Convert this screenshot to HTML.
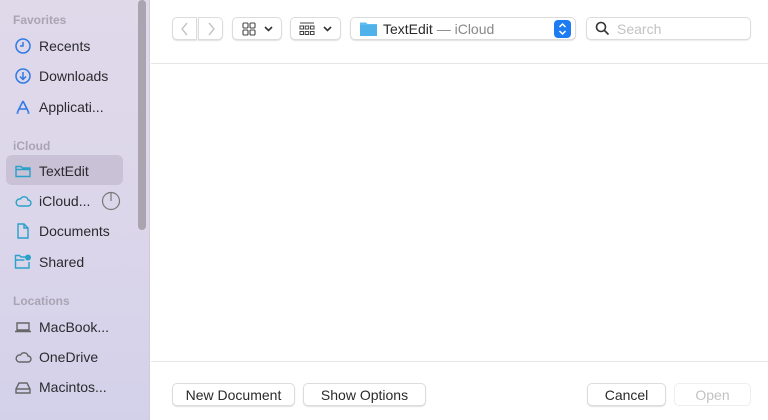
<!DOCTYPE html>
<html><head><style>
*{margin:0;padding:0;box-sizing:border-box}
body{width:768px;height:420px;overflow:hidden;font-family:"Liberation Sans",sans-serif;background:#fff;position:relative}
#side{position:absolute;left:0;top:0;width:150px;height:420px;background:linear-gradient(180deg,#e0d9ea 0%,#dcd6ea 50%,#d3d1ea 100%);border-right:1px solid #cfcbd8}
.h{position:absolute;left:13px;font-size:12px;font-weight:bold;color:#a9a4b4}
.it{position:absolute;left:14px;height:20px;display:flex;align-items:center;font-size:14px;color:#2a2a2e}
.it svg{width:18px;height:18px;margin-right:7px;flex:none}
#sel{position:absolute;left:6px;top:155px;width:117px;height:30px;background:#c9c1d6;border-radius:6px}
#sb{position:absolute;left:138px;top:0;width:8px;height:230px;background:#a9a4b0;border-radius:4px}
.btn{position:absolute;background:#fff;border:1px solid #dcdcdc;border-radius:5px;box-shadow:0 1px 1px rgba(0,0,0,.12);display:flex;align-items:center;justify-content:center;font-size:14px;color:#2a2a2a}
.line{position:absolute;left:151px;right:0;height:1px;background:#e6e6e6}
</style></head><body>
<div id="side">
<div id="sb"></div>
<div class="h" style="top:13px">Favorites</div>
<div class="it" style="top:36px"><svg viewBox="0 0 18 18" fill="none" stroke="#2f7ae5" stroke-width="1.5"><circle cx="9" cy="9" r="7"/><path d="M9 5v4H6"/></svg>Recents</div>
<div class="it" style="top:66px"><svg viewBox="0 0 18 18" fill="none" stroke="#2f7ae5" stroke-width="1.5"><circle cx="9" cy="9" r="7"/><path d="M9 5v7M6 9.5l3 3 3-3"/></svg>Downloads</div>
<div class="it" style="top:97px"><svg viewBox="0 0 18 18" fill="none" stroke="#2f7ae5" stroke-width="1.6"><path d="M9 3L3.5 14M9 3l5.5 11M5 11h8M2.5 15h2M13.5 15h2"/></svg>Applicati...</div>
<div class="h" style="top:139px">iCloud</div>
<div id="sel"></div>
<div class="it" style="top:161px"><svg viewBox="0 0 18 18" fill="none" stroke="#2aa1c9" stroke-width="1.4"><path d="M2 4.5h5l1.5 1.5H16v8.5H2z M2 7.5h14"/></svg>TextEdit</div>
<div class="it" style="top:191px"><svg viewBox="0 0 18 18" fill="none" stroke="#2aa1c9" stroke-width="1.4"><path d="M5 14h9a3 3 0 0 0 0-6 4 4 0 0 0-7.5-1A3.5 3.5 0 0 0 5 14z"/></svg>iCloud...<svg style="margin-left:11px;width:20px;height:20px" viewBox="0 0 20 20" fill="none" stroke="#777" stroke-width="1.2"><circle cx="10" cy="10" r="8.5"/><path d="M10 1.5V10"/></svg></div>
<div class="it" style="top:221px"><svg viewBox="0 0 18 18" fill="none" stroke="#2aa1c9" stroke-width="1.4"><path d="M4 2h6l4 4v10H4z M10 2v4h4"/></svg>Documents</div>
<div class="it" style="top:252px"><svg viewBox="0 0 18 18" fill="none" stroke="#2aa1c9" stroke-width="1.4"><path d="M12 4H7L5.5 2.5H1.5V15H15V9 M1.5 7h9"/><circle cx="14" cy="4.5" r="3" fill="#2aa1c9" stroke="none"/></svg>Shared</div>
<div class="h" style="top:294px">Locations</div>
<div class="it" style="top:317px"><svg viewBox="0 0 18 18" fill="none" stroke="#666" stroke-width="1.4"><path d="M3 5h12v7H3z M1 13.5h16"/></svg>MacBook...</div>
<div class="it" style="top:347px"><svg viewBox="0 0 18 18" fill="none" stroke="#666" stroke-width="1.4"><path d="M5 14h9a3 3 0 0 0 0-6 4 4 0 0 0-7.5-1A3.5 3.5 0 0 0 5 14z"/></svg>OneDrive</div>
<div class="it" style="top:377px"><svg viewBox="0 0 18 18" fill="none" stroke="#666" stroke-width="1.4"><path d="M2 11l3-6h8l3 6v4H2z M2 11h14"/></svg>Macintos...</div>
</div>
<div class="btn" style="left:172px;top:17px;width:25px;height:23px;border-radius:5px 0 0 5px"><svg width="10" height="14" viewBox="0 0 10 14" fill="none" stroke="#c4c4c4" stroke-width="1.4"><path d="M7 1L2 7l5 6"/></svg></div>
<div class="btn" style="left:198px;top:17px;width:25px;height:23px;border-radius:0 5px 5px 0"><svg width="10" height="14" viewBox="0 0 10 14" fill="none" stroke="#c4c4c4" stroke-width="1.4"><path d="M3 1l5 6-5 6"/></svg></div>
<div class="btn" style="left:232px;top:17px;width:50px;height:23px"><svg width="14" height="14" viewBox="0 0 14 14" fill="none" stroke="#444" stroke-width="1.1"><rect x="1" y="1" width="5" height="5" rx="1"/><rect x="8" y="1" width="5" height="5" rx="1"/><rect x="1" y="8" width="5" height="5" rx="1"/><rect x="8" y="8" width="5" height="5" rx="1"/></svg><svg style="margin-left:8px" width="9" height="6" viewBox="0 0 9 6" fill="none" stroke="#333" stroke-width="1.6"><path d="M1 1l3.5 3.5L8 1"/></svg></div>
<div class="btn" style="left:290px;top:17px;width:51px;height:23px"><svg width="16" height="14" viewBox="0 0 16 14" fill="none" stroke="#444" stroke-width="1"><path d="M1 1h14"/><rect x="1" y="4" width="3.5" height="3"/><rect x="6.2" y="4" width="3.5" height="3"/><rect x="11.5" y="4" width="3.5" height="3"/><rect x="1" y="9.5" width="3.5" height="3"/><rect x="6.2" y="9.5" width="3.5" height="3"/><rect x="11.5" y="9.5" width="3.5" height="3"/></svg><svg style="margin-left:8px" width="9" height="6" viewBox="0 0 9 6" fill="none" stroke="#333" stroke-width="1.6"><path d="M1 1l3.5 3.5L8 1"/></svg></div>
<div class="btn" style="left:350px;top:17px;width:226px;height:23px;justify-content:flex-start;padding-left:9px"><svg width="17" height="15" viewBox="0 0 17 15"><path d="M0 1.5h6l1.5 1.5H17V15H0z" fill="#5cbdf0"/><path d="M0 4h17v11H0z" fill="#4fb2ea"/></svg><span style="margin-left:6px;font-size:14px;color:#2a2a2a">TextEdit <span style="color:#888">— iCloud</span></span><div style="position:absolute;right:4px;top:2px;width:17px;height:18px;background:#1d7cf2;border-radius:4px"><svg width="17" height="18" viewBox="0 0 17 18" fill="none" stroke="#fff" stroke-width="1.5"><path d="M5.5 7l3-3 3 3M5.5 11l3 3 3-3"/></svg></div></div>
<div class="btn" style="left:586px;top:17px;width:165px;height:23px;justify-content:flex-start;padding-left:8px;box-shadow:0 1px 1px rgba(0,0,0,.08)"><svg width="15" height="15" viewBox="0 0 15 15" fill="none" stroke="#333" stroke-width="1.6"><circle cx="6" cy="6" r="4.5"/><path d="M9.5 9.5l4 4"/></svg><span style="margin-left:7px;color:#c2c2c2">Search</span></div>
<div class="line" style="top:63px"></div>
<div class="line" style="top:361px"></div>
<div class="btn" style="left:172px;top:383px;width:123px;height:23px">New Document</div>
<div class="btn" style="left:303px;top:383px;width:123px;height:23px">Show Options</div>
<div class="btn" style="left:587px;top:383px;width:79px;height:23px">Cancel</div>
<div class="btn" style="left:674px;top:383px;width:77px;height:23px;color:#c2c2c2;border-color:#eee;box-shadow:none">Open</div>
</body></html>
